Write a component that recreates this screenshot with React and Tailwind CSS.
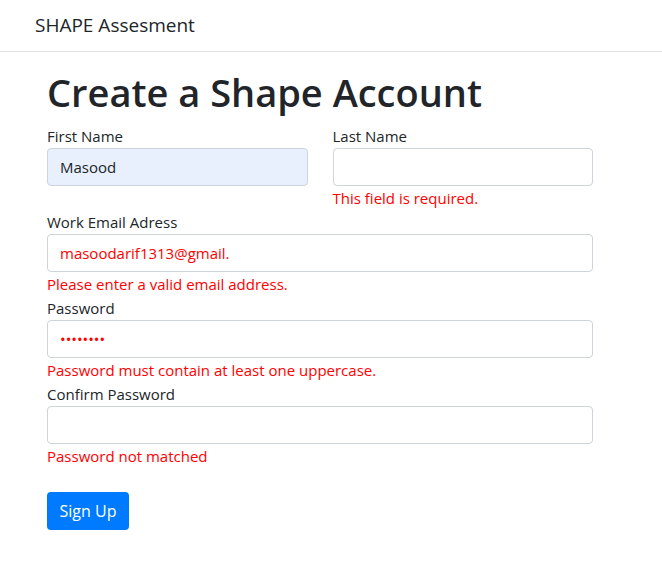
import React from 'react';

const font = { fontFamily: '"Open Sans", "Noto Sans", sans-serif' };

const Field = ({ label, value, type = 'text', error, autofill, red }) => (
  <div className="flex flex-col">
    <label className="text-[15px] leading-[24px] text-[#212529]">{label}</label>
    <input
      type={type}
      defaultValue={value}
      className={`h-[38px] w-full rounded-[4px] border border-[#ced4da] px-3 text-[15px] outline-none ${
        autofill ? 'bg-[#e8f0fe]' : 'bg-white'
      } ${red ? 'text-[#ff0000]' : 'text-[#212529]'}`}
      style={font}
    />
    {error && <div className="text-[15px] leading-[24px] text-[#ff0000]">{error}</div>}
  </div>
);

export default function App() {
  return (
    <div className="min-h-screen bg-white" style={font}>
      {/* Navbar */}
      <div className="h-[52px] border-b border-[#dfdfdf] flex items-center px-[35px]">
        <span className="text-[19px] text-[#212529]">SHAPE Assesment</span>
      </div>

      <div className="ml-[47px] w-[546px] pt-[16px]">
        <h1 className="text-[38px] leading-[48px] font-semibold text-[#212529] mb-2">Create a Shape Account</h1>

        <div className="grid grid-cols-2 gap-[25px]">
          <Field label="First Name" value="Masood" autofill />
          <Field label="Last Name" value="" error="This field is required." />
        </div>

        <Field label="Work Email Adress" value="masoodarif1313@gmail." red error="Please enter a valid email address." />
        <Field label="Password" type="password" value="12345678" red error="Password must contain at least one uppercase." />
        <Field label="Confirm Password" type="password" value="" error="Password not matched" />

        <button className="mt-[24px] h-[38px] w-[82px] rounded-[4px] bg-[#007bff] text-white text-[16px]">
          Sign Up
        </button>
      </div>
    </div>
  );
}
